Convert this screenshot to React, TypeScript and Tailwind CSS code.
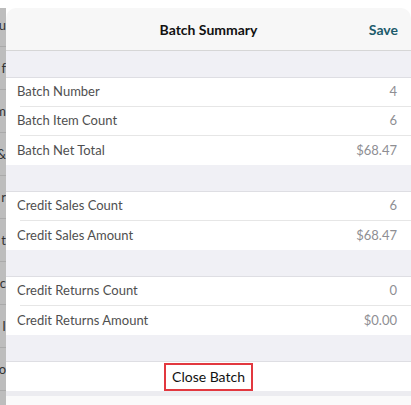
type Row = { label: string; value: string };

const groups: Row[][] = [
  [
    { label: "Batch Number", value: "4" },
    { label: "Batch Item Count", value: "6" },
    { label: "Batch Net Total", value: "$68.47" },
  ],
  [
    { label: "Credit Sales Count", value: "6" },
    { label: "Credit Sales Amount", value: "$68.47" },
  ],
  [
    { label: "Credit Returns Count", value: "0" },
    { label: "Credit Returns Amount", value: "$0.00" },
  ],
];

// letters of the page underneath, peeking out at the left edge
const behind = ["u", "f", "m", "&", "r", "t", "c", "I", "o"];

const SectionGap = () => <div className="h-[27px] bg-[#f0f0f5] border-b border-[#dedee3]" />;

const App = () => {
  return (
    <div className="w-[411px] h-[405px] bg-white flex overflow-hidden" style={{ fontFamily: "Lato, 'Open Sans', sans-serif" }}>
      <div className="w-[6px] shrink-0 mt-[8px] bg-[#bdbdbd] overflow-hidden">
        <div className="-mt-[4px] flex flex-col text-[13px] text-[#333] leading-none">
          {behind.map((ch, i) => (
            <div key={i} className="h-[43px] flex items-center justify-end border-b border-[#aaaaaa] -ml-[4px]">
              {ch}
            </div>
          ))}
        </div>
      </div>
      <div className="flex-1 mt-[8px] rounded-t-[10px] bg-white overflow-hidden flex flex-col">
        <div className="h-[43px] shrink-0 bg-[#f7f7f7] border-b border-[#d6d6d6] flex items-center justify-center relative">
          <span className="text-[14px] font-bold text-[#111]">Batch Summary</span>
          <span className="absolute right-[13px] text-[14px] font-bold text-[#1d5b6b]">Save</span>
        </div>
        <SectionGap />
        {groups.map((g, gi) => (
          <div key={gi}>
            {g.map((r, ri) => {
              const divided = ri < g.length - 1;
              return (
                <div key={ri} className="pl-[14px] bg-white">
                  <div
                    className={`h-[29px] flex items-center justify-between pr-[14px] text-[13px] ${
                      divided ? "border-b border-[#e6e6e6]" : ""
                    }`}
                  >
                    <span className="text-[#4f4f4f] -ml-[3px]">{r.label}</span>
                    <span className="text-[#8e8e93]">{r.value}</span>
                  </div>
                </div>
              );
            })}
            <SectionGap />
          </div>
        ))}
        <div className="h-[29px] shrink-0 bg-white flex items-center justify-center">
          <div className="border-2 border-[#e2383f] px-[6px] h-[28px] flex items-center text-[14px] text-[#111]">Close Batch</div>
        </div>
        <div className="h-[5px] shrink-0 bg-[#ececf0]" />
        <div className="flex-1 bg-[#fafafa]" />
      </div>
    </div>
  );
};

export default App;
